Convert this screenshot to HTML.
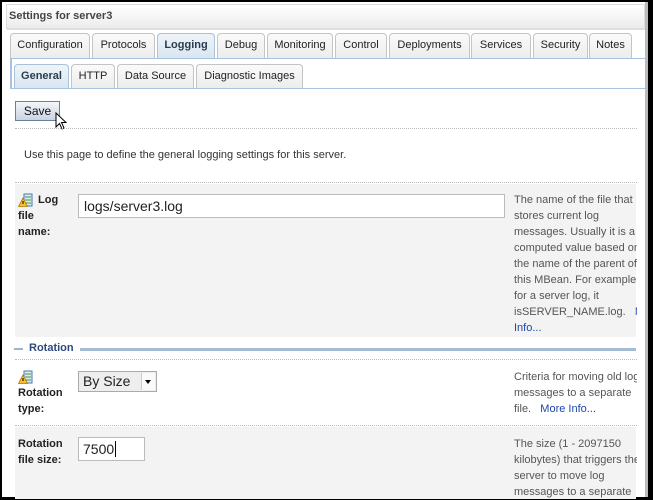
<!DOCTYPE html><html><head><style>
*{margin:0;padding:0;box-sizing:border-box}
body{width:653px;height:499px;background:#000;position:relative;overflow:hidden;font-family:"Liberation Sans",sans-serif;font-size:11px;color:#333}
.a{position:absolute}
#pan{left:2px;top:2px;width:646px;height:495px;background:#fff;border-right:3px solid #bbb}
.tab{position:absolute;top:33px;height:26px;border:1px solid #c4c4c4;border-bottom:none;border-radius:4px 4px 0 0;background:linear-gradient(#fafafa,#ececec);text-align:center;line-height:22px;font-size:11px;color:#222}
.sel{background:linear-gradient(#eef4f9,#d8e6f0);border-color:#a9c2d8;font-weight:bold;color:#2a3c4e}
.st{top:64px;height:25px}
.dot{position:absolute;left:15px;width:622px;border-top:1px dotted #bbb;height:0}
.lbl{position:absolute;font-weight:bold;font-size:11px;line-height:16px;color:#222}
.help{position:absolute;left:514px;width:123px;font-size:11px;line-height:16px;color:#555;white-space:nowrap;overflow:hidden}
.lnk{color:#1d46a8}
.ic{position:absolute;width:15px;height:15px}
</style></head><body>
<div id="pan" class="a"></div>
<div class="a" style="left:6px;top:4px;width:639px;height:25px;background:linear-gradient(#fff,#ececec);border:1px solid #ddd"></div>
<div class="a" style="left:9px;top:10px;font-weight:bold;font-size:11px;color:#444">Settings for server3</div>
<div class="a" style="left:7px;top:29px;width:638px;height:1px;background:#e0e0e0"></div>
<div class="tab" style="left:10px;width:80px">Configuration</div>
<div class="tab" style="left:92px;width:63px">Protocols</div>
<div class="tab sel" style="left:157px;width:58px">Logging</div>
<div class="tab" style="left:217px;width:48px">Debug</div>
<div class="tab" style="left:267px;width:66px">Monitoring</div>
<div class="tab" style="left:335px;width:52px">Control</div>
<div class="tab" style="left:389px;width:81px">Deployments</div>
<div class="tab" style="left:471px;width:60px">Services</div>
<div class="tab" style="left:533px;width:55px">Security</div>
<div class="tab" style="left:589px;width:43px">Notes</div>
<div class="a" style="left:10px;top:58px;width:635px;height:1px;background:#a9c2e0"></div>
<div class="a" style="left:10px;top:59px;width:2px;height:30px;background:#a9c2e0"></div>
<div class="tab st sel" style="left:14px;width:55px">General</div>
<div class="tab st" style="left:71px;width:44px">HTTP</div>
<div class="tab st" style="left:117px;width:77px">Data Source</div>
<div class="tab st" style="left:196px;width:107px">Diagnostic Images</div>
<div class="a" style="left:10px;top:88px;width:635px;height:1px;background:#a9c2e0"></div>
<div class="a" style="left:15px;top:101px;width:45px;height:20px;border:1px solid #6d7f96;background:linear-gradient(#f4f7fb,#c9d4e2);font-size:12px;line-height:18px;text-align:center;color:#111">Save</div>
<svg class="a" style="left:55px;top:112px" width="12" height="20"><path d="M1 1 L1 15 L4.5 11.5 L7 17 L9 16 L6.5 10.5 L11 10.5 Z" fill="#fff" stroke="#000" stroke-width="1"/></svg>
<div class="dot" style="top:128px"></div>
<div class="a" style="left:24px;top:149px;font-size:11px;color:#333">Use this page to define the general logging settings for this server.</div>
<div class="dot" style="top:182px"></div>
<div class="a" style="left:15px;top:184px;width:621px;height:153px;background:#f3f3f3"></div>
<svg class="ic" style="left:18px;top:193px" viewBox="0 0 15 15"><rect x="6" y="1" width="8" height="12" fill="#dde8f2" stroke="#4a79b0"/><path d="M7 4h6M7 7h6M7 10h6" stroke="#3f9a4e"/><path d="M5 5L9.5 13.5H0.5Z" fill="#f2c230" stroke="#a67a00" stroke-width=".8"/><path d="M5 8v3" stroke="#600" stroke-width="1.2"/></svg>
<div class="lbl" style="left:38px;top:192px">Log</div>
<div class="lbl" style="left:18px;top:208px">file<br>name:</div>
<div class="a" style="left:78px;top:194px;width:427px;height:24px;border:1px solid #bbb;background:#fff;font-size:14px;line-height:22px;padding-left:5px;color:#222">logs/server3.log</div>
<div class="help" style="top:192px">The name of the file that<br>stores current log<br>messages. Usually it is a<br>computed value based on<br>the name of the parent of<br>this MBean. For example<br>for a server log, it<br>isSERVER_NAME.log. &nbsp; <span class="lnk">M</span><br><span class="lnk">Info...</span></div>
<div class="a" style="left:14px;top:348px;width:9px;height:2px;background:#98b4cf"></div>
<div class="a" style="left:29px;top:342px;font-weight:bold;color:#2c4a7a;font-size:11px">Rotation</div>
<div class="a" style="left:80px;top:348px;width:556px;height:3px;background:#a5bbd3"></div>
<div class="dot" style="top:359px"></div>
<svg class="ic" style="left:18px;top:370px" viewBox="0 0 15 15"><rect x="6" y="1" width="8" height="12" fill="#dde8f2" stroke="#4a79b0"/><path d="M7 4h6M7 7h6M7 10h6" stroke="#3f9a4e"/><path d="M5 5L9.5 13.5H0.5Z" fill="#f2c230" stroke="#a67a00" stroke-width=".8"/><path d="M5 8v3" stroke="#600" stroke-width="1.2"/></svg>
<div class="a" style="left:78px;top:371px;width:79px;height:21px;border:1px solid #aaa;background:#eee;font-size:14px;line-height:19px;padding-left:4px;color:#222">By Size</div>
<div class="a" style="left:141px;top:373px;width:14px;height:17px;background:#fafafa;border-left:1px solid #ccc"></div>
<div class="a" style="left:145px;top:380px;width:0;height:0;border:3px solid transparent;border-top:4px solid #000"></div>
<div class="lbl" style="left:18px;top:385px">Rotation<br>type:</div>
<div class="help" style="top:369px">Criteria for moving old log<br>messages to a separate<br>file. &nbsp; <span class="lnk">More Info...</span></div>
<div class="dot" style="top:425px"></div>
<div class="a" style="left:15px;top:427px;width:621px;height:72px;background:#f3f3f3"></div>
<div class="lbl" style="left:18px;top:436px">Rotation<br>file size:</div>
<div class="a" style="left:78px;top:437px;width:67px;height:24px;border:1px solid #bbb;background:#fff;font-size:14px;line-height:22px;padding-left:4px;color:#222">7500<span style="border-left:1px solid #000;margin-left:1px"></span></div>
<div class="help" style="top:436px">The size (1 - 2097150<br>kilobytes) that triggers the<br>server to move log<br>messages to a separate</div>
</body></html>
